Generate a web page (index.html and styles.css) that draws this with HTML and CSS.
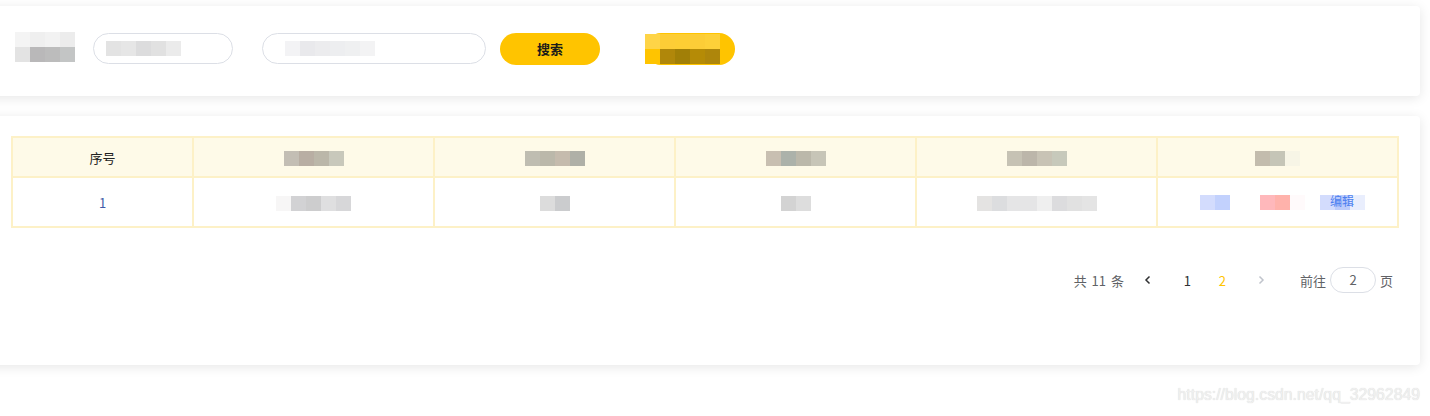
FILE: index.html
```html
<!DOCTYPE html>
<html lang="zh-CN">
<head>
    <meta charset="UTF-8">
    <title>列表</title>
    <link rel="stylesheet" href="styles.css">
</head>
<body>
    <div class="page">
        <!-- search bar -->
        <section class="card search-card">
            <div class="field-label">
                <span class="px" style="background:#f4f4f4"></span><span class="px" style="background:#efefef"></span><span class="px" style="background:#f2f2f2"></span><span class="px" style="background:#ececec"></span>
                <span class="px" style="background:#e3e3e3"></span><span class="px" style="background:#b9b8b9"></span><span class="px" style="background:#bcbcbc"></span><span class="px" style="background:#c3c5c5"></span>
            </div>
            <div class="input input-short">
                <span class="px" style="background:#e3e3e3"></span><span class="px" style="background:#e6e6e6"></span><span class="px" style="background:#dcdcdd"></span><span class="px" style="background:#e1e1e1"></span><span class="px" style="background:#ebebeb"></span>
            </div>
            <div class="input input-long">
                <span class="px" style="background:#f3f3f5"></span><span class="px" style="background:#e9e9ec"></span><span class="px" style="background:#ececee"></span><span class="px" style="background:#edeef0"></span><span class="px" style="background:#eff0f1"></span><span class="px" style="background:#f3f3f4"></span>
            </div>
            <button class="btn-yellow">搜索</button>
            <div class="btn-yellow btn-blur">
                <div class="blur-row">
                    <span class="px" style="background:#fed447"></span><span class="px" style="background:#fdcd36"></span><span class="px" style="background:#fdce34"></span><span class="px" style="background:#fccd37"></span><span class="px" style="background:#fdd039"></span>
                </div>
                <div class="blur-row">
                    <span class="px" style="background:#ffc400"></span><span class="px" style="background:#b0870a"></span><span class="px" style="background:#a17f07"></span><span class="px" style="background:#b58b06"></span><span class="px" style="background:#ae860b"></span>
                </div>
            </div>
        </section>

        <!-- data table -->
        <section class="card table-card">
            <table class="data-table">
                <thead>
                    <tr>
                        <th class="col-index">序号</th>
                        <th><span class="blk" style="width:60px;background:linear-gradient(90deg,#c3beb4 25%,#b8aea3 25% 50%,#bbb7a9 50% 75%,#c8c8bb 75%)"></span></th>
                        <th><span class="blk" style="width:60px;background:linear-gradient(90deg,#bfbdb1 25%,#bbb8aa 25% 50%,#c5bbad 50% 75%,#afb0a7 75%)"></span></th>
                        <th><span class="blk" style="width:60px;background:linear-gradient(90deg,#c8bfb1 25%,#acb2aa 25% 50%,#bbb8aa 50% 75%,#c7c5b7 75%)"></span></th>
                        <th><span class="blk" style="width:60px;background:linear-gradient(90deg,#c6c2b4 25%,#bcb6aa 25% 50%,#c8c3b5 50% 75%,#c7c9bb 75%)"></span></th>
                        <th><span class="blk" style="width:45px;background:linear-gradient(90deg,#c3bcad 33%,#c5c5b7 33% 66%,#f7f5e6 66%)"></span></th>
                    </tr>
                </thead>
                <tbody>
                    <tr>
                        <td class="col-index num">1</td>
                        <td><span class="blk" style="width:75px;background:linear-gradient(90deg,#f7f6f6 20%,#d2d2d4 20% 40%,#cdcdce 40% 60%,#dfdfe0 60% 80%,#d7d7d9 80%)"></span></td>
                        <td><span class="blk" style="width:30px;background:linear-gradient(90deg,#dcdcdc 50%,#cbccce 50%)"></span></td>
                        <td><span class="blk" style="width:30px;background:linear-gradient(90deg,#d3d3d3 50%,#dddddd 50%)"></span></td>
                        <td><span class="blk" style="width:120px;background:linear-gradient(90deg,#e4e3e2 12.5%,#dcdddf 12.5% 25%,#e5e5e6 25% 50%,#efefef 50% 62.5%,#dcdcde 62.5% 75%,#e1e1e1 75% 87.5%,#e4e4e4 87.5%)"></span></td>
                        <td>
                            <div class="ops">
                                <span class="blk op-view" style="width:30px;background:linear-gradient(90deg,#d3dcfd 50%,#c2d1fd 50%)"></span>
                                <span class="blk op-del" style="width:45px;background:linear-gradient(90deg,#ffb8bb 33%,#ffb2ab 33% 66%,#fffafb 66%)"></span>
                                <span class="blk op-edit" style="background:linear-gradient(90deg,#d3dcfd 33%,#bccbfb 33% 66%,#e9eefd 66%)">编辑</span>
                            </div>
                        </td>
                    </tr>
                </tbody>
            </table>

            <div class="pager">
                <span class="total">共 11 条</span>
                <span class="arrow">
                    <svg width="10" height="10" viewBox="0 0 10 10"><path d="M6.5 1.5 3 5l3.5 3.5" fill="none" stroke="#303133" stroke-width="1.5"/></svg>
                </span>
                <span class="page-num">1</span>
                <span class="page-num active">2</span>
                <span class="arrow disabled">
                    <svg width="10" height="10" viewBox="0 0 10 10"><path d="M3.5 1.5 7 5 3.5 8.5" fill="none" stroke="#c0c4cc" stroke-width="1.5"/></svg>
                </span>
                <span class="jump">前往<span class="jump-input">2</span>页</span>
            </div>
        </section>

        <div class="watermark">https://blog.csdn.net/qq_32962849</div>
    </div>
</body>
</html>
```

FILE: styles.css
```css
body {
    margin: 0;
    background-color: #fff;
    font-family: "Noto Sans CJK SC", "Noto Sans", sans-serif;
    font-size: 13px;
    color: #606266;
    overflow: hidden;
}
.page {
    width: 1440px;
    margin-left: -20px;
    padding-top: 6px;
}
.card {
    background-color: #fff;
    border-radius: 4px;
    box-shadow: 0 2px 12px rgba(0, 0, 0, 0.1);
}
.px {
    display: block;
    width: 15px;
    height: 15px;
}

/* search bar */
.search-card {
    height: 90px;
    display: flex;
    align-items: center;
    padding-left: 35px;
    padding-bottom: 5px;
    box-sizing: border-box;
}
.field-label {
    display: grid;
    grid-template-columns: repeat(4, 15px);
    margin-top: -4px;
}
.input {
    display: flex;
    align-items: center;
    height: 31px;
    box-sizing: border-box;
    border: 1px solid #dcdfe6;
    border-radius: 16px;
    padding-left: 12px;
}
.input-short {
    width: 140px;
    margin-left: 18px;
}
.input-long {
    width: 224px;
    margin-left: 29px;
    padding-left: 22px;
}
.btn-yellow {
    width: 100px;
    height: 32px;
    margin-left: 14px;
    border: none;
    border-radius: 16px;
    background-color: #ffc400;
    color: #1a1a1a;
    font-family: inherit;
    font-size: 13px;
    font-weight: bold;
}
.btn-blur {
    width: 90px;
    margin-left: 45px;
    display: flex;
    flex-direction: column;
    justify-content: center;
    align-items: flex-start;
    box-sizing: border-box;
}
.blur-row {
    display: flex;
}

/* table */
.table-card {
    margin-top: 20px;
    height: 249px;
    padding: 20px 22px 0 31px;
    box-sizing: border-box;
}
.data-table {
    width: 1388px;
    border-collapse: collapse;
    border: 2px solid #fdf1c7;
    table-layout: fixed;
}
.data-table th,
.data-table td {
    border: 2px solid #fdf1c7;
    text-align: center;
    padding: 0;
}
.data-table th {
    height: 38px;
    background-color: #fefae8;
    color: #222;
    font-weight: normal;
}
.data-table td {
    height: 48px;
}
.col-index {
    width: 179px;
}
.num {
    color: #3f5aa8;
}
.blk {
    display: inline-block;
    height: 15px;
    vertical-align: middle;
}
.ops {
    display: flex;
    justify-content: center;
    padding-left: 9px;
}
.op-del {
    margin-left: 30px;
}
.op-edit {
    width: 45px;
    margin-left: 15px;
    color: #4c7ff0;
    font-size: 12px;
    line-height: 12px;
    text-align: center;
}

/* pagination */
.pager {
    display: flex;
    justify-content: flex-end;
    align-items: center;
    margin-top: 39px;
    padding-right: 5px;
    color: #606266;
}
.total {
    margin-right: 3px;
    word-spacing: 2px;
}
.arrow {
    display: flex;
    width: 43px;
    justify-content: center;
}
.page-num {
    width: 35px;
    text-align: center;
    color: #303133;
}
.page-num.active {
    color: #ffc400;
}
.arrow.disabled {
    margin-right: 17px;
}
.jump {
    display: flex;
    align-items: center;
}
.jump-input {
    width: 46px;
    height: 26px;
    box-sizing: border-box;
    margin: 0 4px;
    border: 1px solid #dcdfe6;
    border-radius: 13px;
    text-align: center;
    line-height: 24px;
}
.watermark {
    text-align: right;
    margin-top: 21px;
    padding-right: 0;
    font-family: "Liberation Sans", sans-serif;
    font-size: 15.8px;
    color: #f0f0f0;
    text-shadow: 0 0 1px #d0d0d0;
}
```
